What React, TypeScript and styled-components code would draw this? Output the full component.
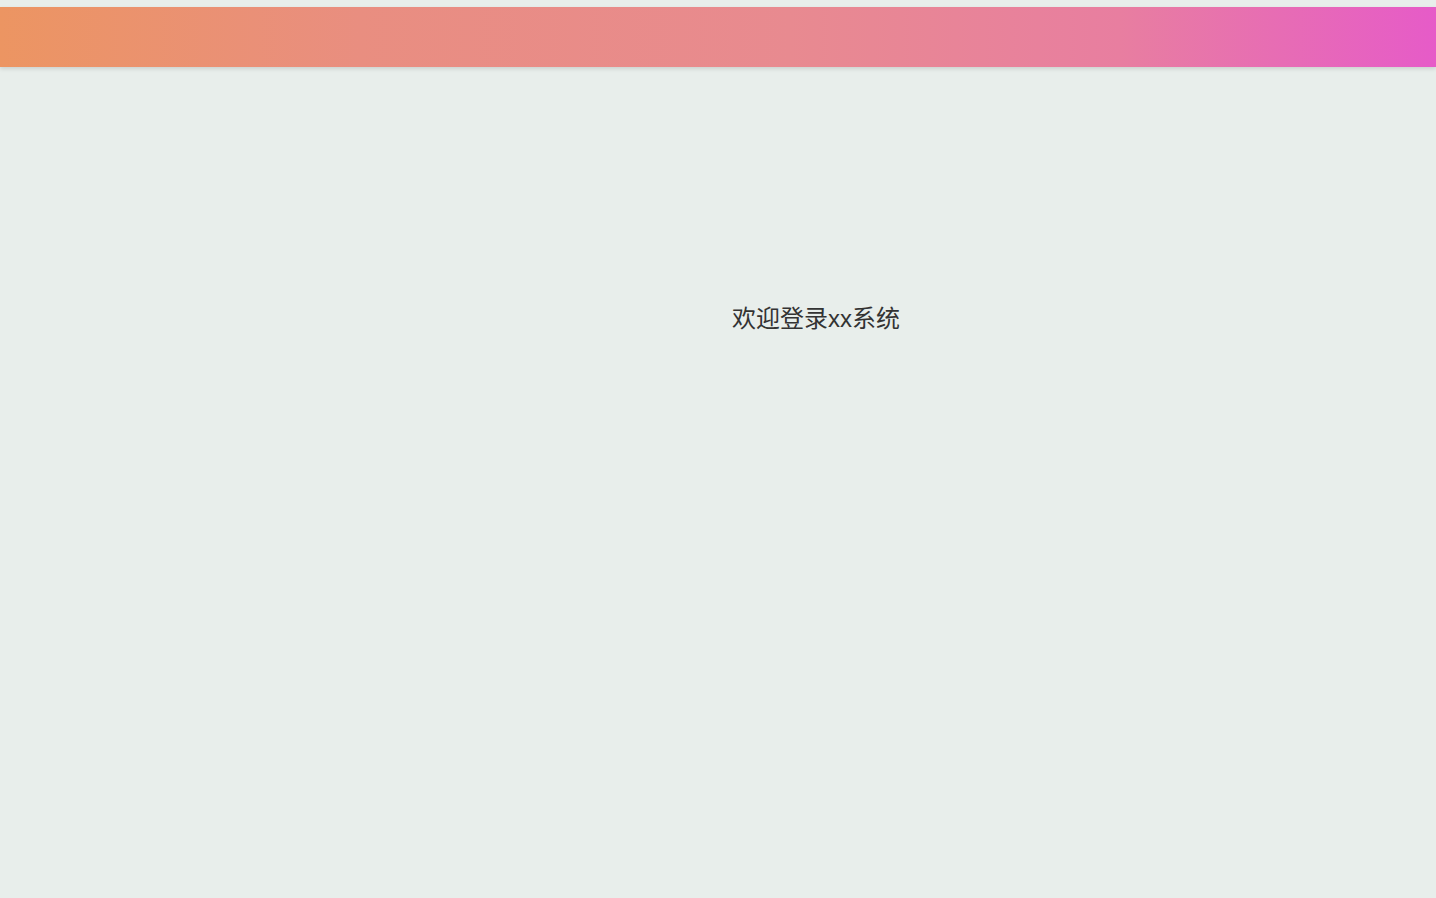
import styled, { createGlobalStyle } from 'styled-components';

const GlobalStyle = createGlobalStyle`
  html, body {
    margin: 0;
    padding: 0;
    background: #e8eeeb;
    font-family: "Liberation Sans", "Noto Sans CJK SC", sans-serif;
  }
`

const Page = styled.div`
  min-height: 898px;
  display: flex;
  flex-flow: column nowrap;
  padding-top: 7px;
  box-sizing: border-box;
`

const Header = styled.header`
  height: 60px;
  background-image: linear-gradient(90deg, #ec9562 0%, #e98e80 25%, #e88a90 55%, #e87ea0 78%, #e65bc8 100%);
  box-shadow: 0 2px 4px rgba(0, 0, 0, 0.12);
`

const Main = styled.main`
  flex: 1;
  display: flex;
  justify-content: center;
  padding: 237px 0 0 196px;
`

const Welcome = styled.h1`
  margin: 0;
  font-size: 24px;
  font-weight: normal;
  line-height: 30px;
  color: #333;
  font-family: "Liberation Sans", "Noto Sans CJK SC", sans-serif;
`

export default function App() {
  return (
    <Page>
      <GlobalStyle />
      <Header />
      <Main>
        <Welcome>欢迎登录xx系统</Welcome>
      </Main>
    </Page>
  );
}
